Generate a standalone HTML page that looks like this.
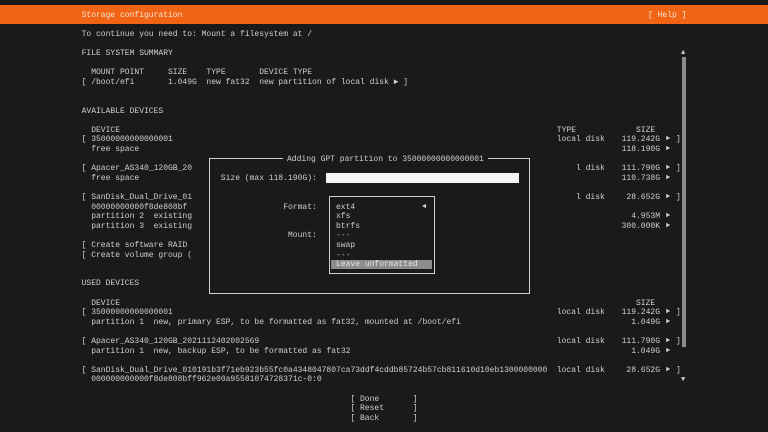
<!DOCTYPE html>
<html><head><meta charset="utf-8"><style>
html,body{margin:0;padding:0;}
body{width:768px;height:432px;background:#1a1a1a;position:relative;overflow:hidden;font-family:"Liberation Mono","DejaVu Sans Mono",monospace;font-size:8px;color:#cfcfcf;}
.l{position:absolute;white-space:pre;line-height:9.6px;height:9.6px;margin-top:1px;}
.bar{position:absolute;left:0;top:5px;width:768px;height:19px;background:#f06414;}
.dim{color:#a8a8a8}
.s{position:absolute;white-space:pre;line-height:9.6px;margin-top:1px;right:108px;text-align:right}
.a{position:absolute;left:666px;line-height:9.6px;margin-top:1px;font-size:7px}
.b{position:absolute;left:676px;line-height:9.6px;margin-top:1px}
</style></head><body>
<div class="bar"></div>
<div class="l" style="left:81.6px;top:9.6px;color:#f4e4d8">Storage configuration</div>
<div class="l" style="left:648px;top:9.6px;color:#f4e4d8">[ Help ]</div>

<div class="l" style="left:81.6px;top:28.8px">To continue you need to: Mount a filesystem at /</div>
<div class="l" style="left:81.6px;top:48px">FILE SYSTEM SUMMARY</div>
<div class="l" style="left:81.6px;top:67.2px">  MOUNT POINT     SIZE    TYPE       DEVICE TYPE</div>
<div class="l" style="left:81.6px;top:76.8px">[ /boot/efi       1.049G  new fat32  new partition of local disk ► ]</div>
<div class="l" style="left:81.6px;top:105.6px">AVAILABLE DEVICES</div>
<div class="l" style="left:81.6px;top:124.8px">  DEVICE</div>
<div class="l" style="left:81.6px;top:134.4px">[ 35000000000000001</div>
<div class="l" style="left:81.6px;top:144px">  free space</div>
<div class="l" style="left:81.6px;top:163.2px">[ Apacer_AS340_120GB_20</div>
<div class="l" style="left:81.6px;top:172.8px">  free space</div>
<div class="l" style="left:81.6px;top:192px">[ SanDisk_Dual_Drive_01</div>
<div class="l" style="left:81.6px;top:201.6px">  00000000000f8de808bf</div>
<div class="l" style="left:81.6px;top:211.2px">  partition 2  existing</div>
<div class="l" style="left:81.6px;top:220.8px">  partition 3  existing</div>
<div class="l" style="left:81.6px;top:240px">[ Create software RAID</div>
<div class="l" style="left:81.6px;top:249.6px">[ Create volume group (</div>

<div class="l" style="left:556.8px;top:124.8px">TYPE</div>
<div class="s" style="top:124.8px">SIZE </div>
<div class="l" style="left:556.8px;top:134.4px">local disk</div>
<div class="s" style="top:134.4px">119.242G</div><div class="a" style="top:134.4px">►</div><div class="b" style="top:134.4px">]</div>
<div class="s" style="top:144px">118.190G</div><div class="a" style="top:144px">►</div>
<div class="l" style="left:576px;top:163.2px">l disk</div>
<div class="s" style="top:163.2px">111.790G</div><div class="a" style="top:163.2px">►</div><div class="b" style="top:163.2px">]</div>
<div class="s" style="top:172.8px">110.738G</div><div class="a" style="top:172.8px">►</div>
<div class="l" style="left:576px;top:192px">l disk</div>
<div class="s" style="top:192px">28.652G</div><div class="a" style="top:192px">►</div><div class="b" style="top:192px">]</div>
<div class="s" style="top:211.2px">4.953M</div><div class="a" style="top:211.2px">►</div>
<div class="s" style="top:220.8px">300.000K</div><div class="a" style="top:220.8px">►</div>

<div class="l" style="left:81.6px;top:278.4px">USED DEVICES</div>
<div class="l" style="left:81.6px;top:297.6px">  DEVICE</div>
<div class="l" style="left:81.6px;top:307.2px">[ 35000000000000001</div>
<div class="l" style="left:81.6px;top:316.8px">  partition 1  new, primary ESP, to be formatted as fat32, mounted at /boot/efi</div>
<div class="l" style="left:81.6px;top:336px">[ Apacer_AS340_120GB_2021112402002569</div>
<div class="l" style="left:81.6px;top:345.6px">  partition 1  new, backup ESP, to be formatted as fat32</div>
<div class="l" style="left:81.6px;top:364.8px">[ SanDisk_Dual_Drive_010191b3f71eb923b55fc0a4348047807ca73ddf4cddb85724b57cb811610d10eb1300000000</div>
<div class="l" style="left:81.6px;top:374.4px">  000000000000f8de808bff962e00a95581074728371c-0:0</div>
<div class="s" style="top:297.6px">SIZE </div>
<div class="l" style="left:556.8px;top:307.2px">local disk</div>
<div class="s" style="top:307.2px">119.242G</div><div class="a" style="top:307.2px">►</div><div class="b" style="top:307.2px">]</div>
<div class="s" style="top:316.8px">1.049G</div><div class="a" style="top:316.8px">►</div>
<div class="l" style="left:556.8px;top:336px">local disk</div>
<div class="s" style="top:336px">111.790G</div><div class="a" style="top:336px">►</div><div class="b" style="top:336px">]</div>
<div class="s" style="top:345.6px">1.049G</div><div class="a" style="top:345.6px">►</div>
<div class="l" style="left:556.8px;top:364.8px">local disk</div>
<div class="s" style="top:364.8px">28.652G</div><div class="a" style="top:364.8px">►</div><div class="b" style="top:364.8px">]</div>

<div class="l" style="left:350.4px;top:393.6px">[ Done       ]</div>
<div class="l" style="left:350.4px;top:403.2px">[ Reset      ]</div>
<div class="l" style="left:350.4px;top:412.8px">[ Back       ]</div>

<!-- scrollbar -->
<div class="l" style="left:681px;top:48px;font-size:7px">▲</div>
<div style="position:absolute;left:682px;top:57px;width:4px;height:290px;background:#8a8a8a"></div>
<div class="l" style="left:681px;top:375px;font-size:7px">▼</div>

<!-- dialog -->
<div style="position:absolute;left:192px;top:153.6px;width:384px;height:144px;background:#1a1a1a"></div>
<div style="position:absolute;left:209px;top:158px;width:319px;height:134px;border:1px solid #cfcfcf"></div>
<div class="l" style="left:283px;top:154px;background:#1a1a1a;padding:0 4px">Adding GPT partition to 35000000000000001</div>
<div class="l" style="left:220.8px;top:172.8px">Size (max 118.190G):</div>
<div style="position:absolute;left:326px;top:173px;width:193px;height:10px;background:#f4f4f4"></div>
<div class="l" style="left:283.2px;top:201.6px">Format:</div>
<div class="l" style="left:288px;top:230.4px">Mount:</div>
<div style="position:absolute;left:329px;top:196px;width:104px;height:76px;border:1px solid #cfcfcf"></div>
<div class="l" style="left:336px;top:201.6px">ext4</div>
<div class="l" style="left:422px;top:201.6px;font-size:7px">◄</div>
<div class="l" style="left:336px;top:211.2px">xfs</div>
<div class="l" style="left:336px;top:220.8px">btrfs</div>
<div class="l dim" style="left:336px;top:230.4px">---</div>
<div class="l" style="left:336px;top:240px">swap</div>
<div class="l dim" style="left:336px;top:249.6px">---</div>
<div style="position:absolute;left:331px;top:260px;width:101px;height:9px;background:#8c8c8c"></div>
<div class="l" style="left:336px;top:259.2px;color:#e6e6e6">Leave unformatted</div>
</body></html>
